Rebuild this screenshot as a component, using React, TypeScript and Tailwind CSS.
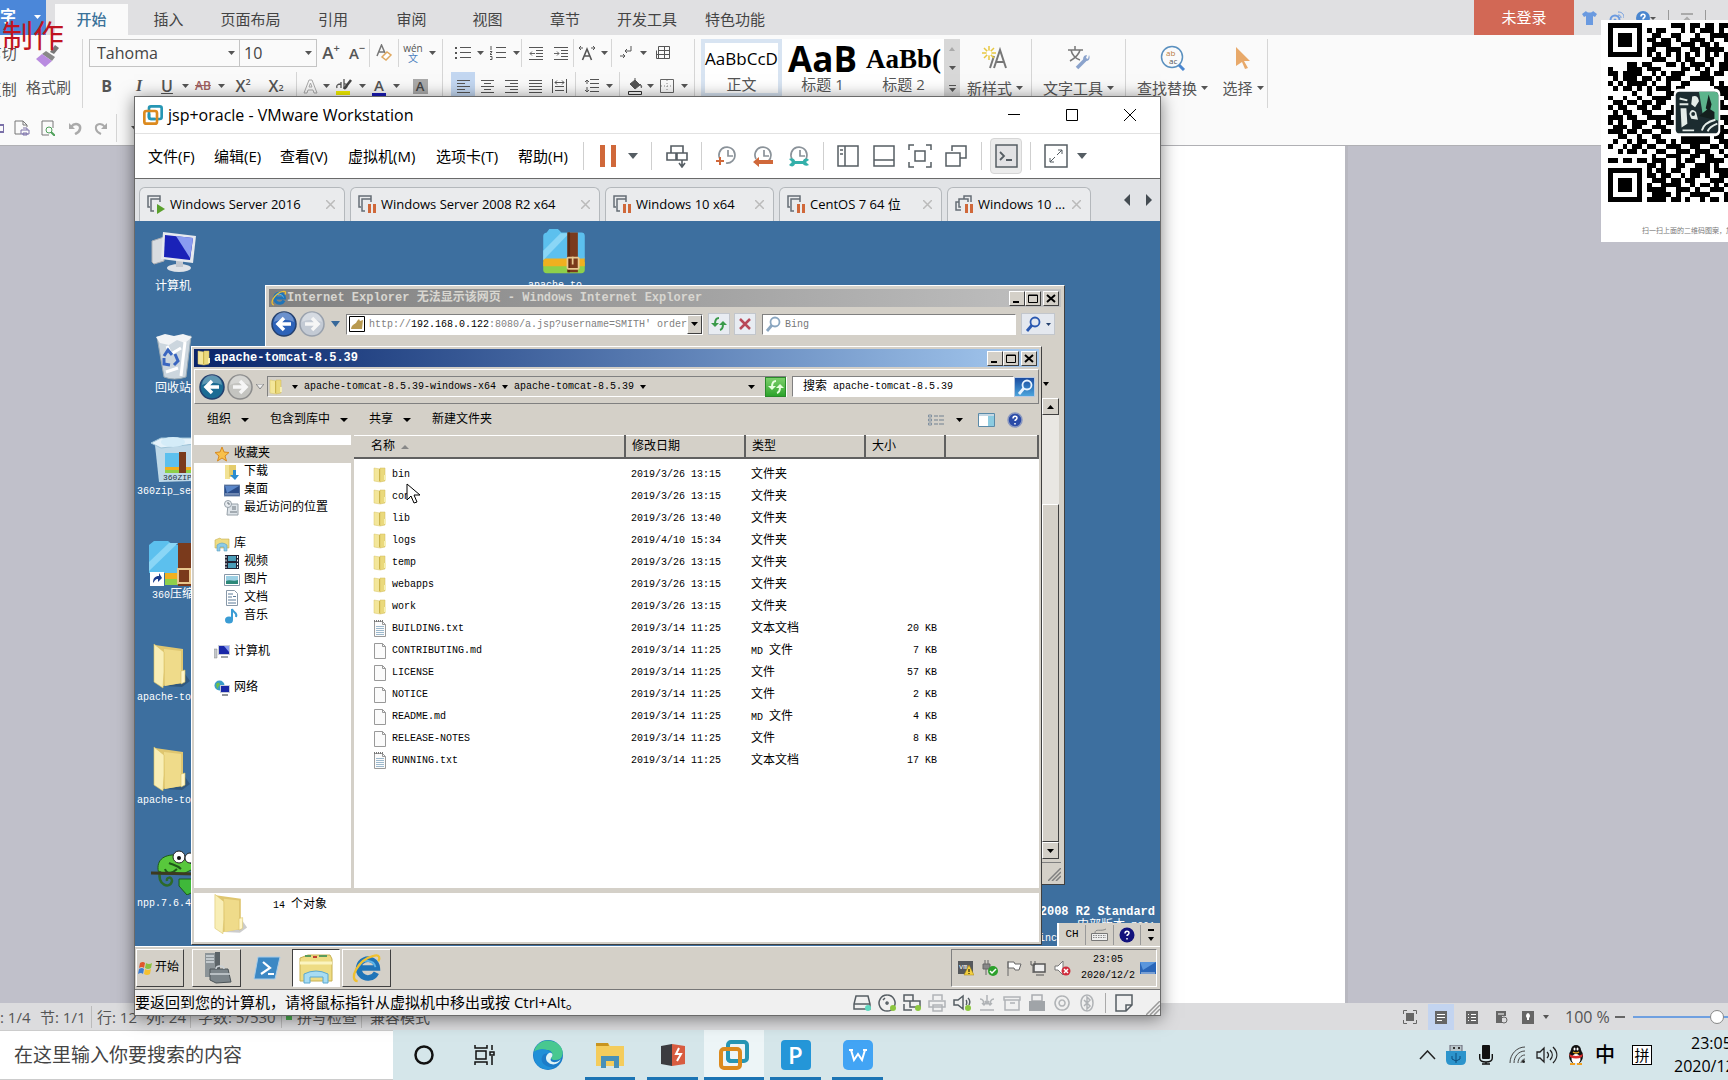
import { ReactNode } from "react";
import clsx from "clsx";

type Kids = { children?: ReactNode; className?: string };

const ui = "font-['Open_Sans','Noto_Sans_CJK_SC',sans-serif]";
const mono = "font-['Liberation_Mono','Noto_Sans_CJK_SC',monospace]";
const raised =
  "border border-t-white border-l-white border-r-[#404040] border-b-[#404040] bg-[#d4d0c8]";
const sunken =
  "border border-t-[#808080] border-l-[#808080] border-r-white border-b-white";

const Svg = ({
  w,
  h = w,
  box,
  children,
  className,
}: Kids & { w: number; h?: number; box?: string }) => (
  <svg
    width={w}
    height={h}
    viewBox={box ?? `0 0 ${w} ${h}`}
    fill="none"
    className={clsx("shrink-0", className)}
    aria-hidden="true"
  >
    {children}
  </svg>
);

const Caret = ({ className = "text-[#555]" }: { className?: string }) => (
  <Svg w={7} h={4} className={className}>
    <path d="M0 0h7L3.500 4z" fill="currentColor" />
  </Svg>
);

// Guest text is a bitmap-like face: narrow Latin next to 12px Chinese
const Guest = ({ text }: { text: string }) => (
  <>
    {text
      .split(/([\u4e00-\u9fff]+)/)
      .filter(Boolean)
      .map((part, i) => (
        <span key={i} className={/[\u4e00-\u9fff]/.test(part) ? "text-[12px]" : undefined}>
          {part}
        </span>
      ))}
  </>
);

const Tool = ({ children, className, label }: Kids & { label: string }) => (
  <button
    type="button"
    aria-label={label}
    className={clsx("flex h-6 shrink-0 items-center justify-center", className)}
  >
    {children}
  </button>
);

const Drop = ({ label }: { label: string }) => (
  <Tool label={label} className="w-[10px]">
    <Caret />
  </Tool>
);

const Sep = ({ className }: { className?: string }) => (
  <div className={clsx("h-7 w-px shrink-0 bg-[#d6d6d6]", className)} />
);

/* ---------- word processor ---------- */

const ribbonTabs = [
  { name: "插入", width: "w-[81px]" },
  { name: "页面布局", width: "w-[83px]" },
  { name: "引用", width: "w-[82px]" },
  { name: "审阅", width: "w-[75px]" },
  { name: "视图", width: "w-[77px]" },
  { name: "章节", width: "w-[78px]" },
  { name: "开发工具", width: "w-[86px]" },
  { name: "特色功能", width: "w-[90px]" },
];

const AppTabs = () => (
  <header className="flex h-[35px] shrink-0 bg-[#e0e0e2] text-[15px] text-[#444]">
    <button
      type="button"
      className="flex w-[46px] items-start justify-between bg-[#4b87d9] pr-[5px] pt-[5px] text-[16px] font-bold leading-[22px] text-white"
    >
      字
      <Caret className="mt-[10px] text-white" />
    </button>
    <nav className="flex items-end pl-[9px]">
      <button
        type="button"
        className="h-[31px] w-[73px] bg-[#fafafa] font-medium text-[#3a7199]"
      >
        开始
      </button>
      {ribbonTabs.map((tab) => (
        <button
          key={tab.name}
          type="button"
          className={clsx("h-[31px] whitespace-nowrap", tab.width)}
        >
          {tab.name}
        </button>
      ))}
    </nav>
    <div className="ml-auto flex h-full">
      <button type="button" className="w-[100px] bg-[#d26855] text-white">
        未登录
      </button>
      <div className="flex w-[154px] items-center gap-3 pl-2">
        <Svg w={15} h={14}>
          <path d="M4 0c1 2 6 2 7 0l4 3-2 3-2-1v9H4V5L2 6 0 3z" fill="#6a9ae0" />
        </Svg>
        <Svg w={15} h={14}>
          <circle cx="6" cy="9" r="4.500" stroke="#6a9ae0" strokeWidth="2" />
          <circle cx="6" cy="9" r="1.500" fill="#6a9ae0" />
          <path d="M9 4c2 0 3 1 3 3M9 1c4 0 6 2 6 6" stroke="#6a9ae0" />
        </Svg>
        <Svg w={20} h={14}>
          <circle cx="7" cy="7" r="7" fill="#4a86cf" />
          <path d="M5 5.500c0-3 4-3 4-.5 0 2-2 1.500-2 3.500M7 10v1" stroke="#fff" strokeWidth="1.600" />
          <path d="M14 6h6l-3 3z" fill="#555" />
        </Svg>
        <div className="h-4 w-px bg-[#999]" />
        <Svg w={12} h={10}>
          <path d="M0 1h12M3 8l3-3 3 3" stroke="#aaa" strokeWidth="2" />
        </Svg>
        <div className="h-4 w-px bg-[#999]" />
      </div>
    </div>
  </header>
);

const lineSets: Record<string, string> = {
  left: "M0 .5h13M0 3.500h8M0 6.500h13M0 9.500h8M0 12.500h13",
  center: "M0 .5h13M3 3.500h7M0 6.500h13M3 9.500h7M0 12.500h13",
  right: "M0 .5h13M5 3.500h8M0 6.500h13M5 9.500h8M0 12.500h13",
  full: "M0 .5h13M0 3.500h13M0 6.500h13M0 9.500h13M0 12.500h13",
};

const Lines = ({ kind }: { kind: string }) => (
  <Svg w={13}>
    <path d={lineSets[kind]} stroke="#555" />
  </Svg>
);

const Indent = ({ flip }: { flip?: boolean }) => (
  <Svg w={14} h={13}>
    <path d="M0 .5h14M7 3.500h7M7 6.500h7M7 9.500h7M0 12.500h14" stroke="#555" />
    <path
      d={flip ? "M0 6.500h5M3 4.500l2 2-2 2" : "M6 6.500H1M3 4.500l-2 2 2 2"}
      stroke="#666"
    />
  </Svg>
);

const FontGroup = () => (
  <div className="flex w-[354px] flex-col pl-[6px]">
    <div className="flex h-7 items-center">
      <select
        aria-label="字体"
        className="h-7 w-[151px] appearance-none border border-[#c4c4c4] bg-[#fafafa] pl-[7px] text-[16px] leading-6 text-[#444]"
      >
        <option>Tahoma</option>
      </select>
      <Caret className="-ml-[12px] mr-[5px] text-[#555]" />
      <select
        aria-label="字号"
        className="-ml-px h-7 w-[78px] appearance-none border border-[#c4c4c4] bg-[#fafafa] pl-1 text-[16px] leading-6 text-[#444]"
      >
        <option>10</option>
      </select>
      <Caret className="-ml-[12px] mr-[5px] text-[#555]" />
      <Tool label="增大字号" className="w-7 text-[17px] font-semibold text-[#555]">
        A<sup className="text-[11px]">+</sup>
      </Tool>
      <Tool label="减小字号" className="w-6 text-[15px] font-semibold text-[#555]">
        A<sup className="text-[11px]">−</sup>
      </Tool>
      <Sep />
      <Tool label="清除格式" className="w-7">
        <Svg w={16} h={18}>
          <path d="M1 12L5.500 1 9 9M3 8h5" stroke="#777" strokeWidth="1.500" />
          <path d="M6 13l5-5 4 3-5 5z" fill="#fff" stroke="#e0a860" strokeWidth="1.500" />
        </Svg>
      </Tool>
      <Sep />
      <Tool label="拼音指南" className="w-7 flex-col text-[10px] leading-[10px] text-[#555]">
        wén
        <span className="text-[10px] text-[#4a7fc0]">文</span>
      </Tool>
      <Drop label="拼音选项" />
    </div>
    <div className="mt-[5px] flex h-7 items-center text-[16px] font-semibold text-[#555]">
      <Tool label="加粗" className="w-[35px] font-bold">B</Tool>
      <Tool label="倾斜" className="w-[30px] font-['Liberation_Serif',serif] italic">I</Tool>
      <Tool label="下划线" className="w-[26px] underline">U</Tool>
      <Drop label="下划线选项" />
      <Tool label="删除线" className="w-[26px] text-[12px] text-[#a06060] line-through">AB</Tool>
      <Drop label="删除线选项" />
      <Tool label="上标" className="w-[34px]">X<sup className="text-[9px]">2</sup></Tool>
      <Tool label="下标" className="w-[32px]">X<sub className="text-[9px]">2</sub></Tool>
      <Sep className="ml-[4px] mr-[2px]" />
      <Tool label="文字效果" className="w-[22px]">
        <Svg w={15} h={15}>
          <path d="M1 14L6 1h3l5 13h-3l-1-3H5l-1 3zM6 8h3L7.500 4z" stroke="#aaa" />
        </Svg>
      </Tool>
      <Drop label="文字效果选项" />
      <Tool label="突出显示" className="w-[26px]">
        <Svg w={17} h={18}>
          <path d="M0 14h14v4H0z" fill="#f4f000" />
          <path d="M1 11c-1-3 1-4 4-4M5 5v6M8 2v9c4 1 4-5 0-4" stroke="#555" strokeWidth="1.300" />
          <path d="M8 12l7-9" stroke="#444" strokeWidth="2.500" />
        </Svg>
      </Tool>
      <Drop label="突出显示选项" />
      <Tool label="字体颜色" className="w-6">
        <span className="h-[19px] border-b-[3px] border-[#1a1ab8] px-[2px] text-[15px] leading-4">A</span>
      </Tool>
      <Drop label="字体颜色选项" />
      <Tool label="字符底纹" className="ml-[7px] w-6">
        <span className="h-[15px] w-[15px] bg-[#aaa] text-center text-[13px] leading-[15px] text-[#444]">A</span>
      </Tool>
    </div>
  </div>
);

const ParagraphGroup = () => (
  <div className="flex w-[251px] flex-col pl-2">
    <div className="flex h-7 items-center">
      <Tool label="项目符号" className="w-[24px]">
        <Svg w={16} h={14}>
          <path d="M5 1.500h11M5 6.500h11M5 11.500h11" stroke="#555" />
          <path d="M0 1h2v2H0zM0 6h2v2H0zM0 11h2v2H0z" fill="#555" />
        </Svg>
      </Tool>
      <Drop label="项目符号选项" />
      <Tool label="编号" className="w-[26px]">
        <Svg w={16} h={15}>
          <path d="M6 1.500h10M6 6.500h10M6 11.500h10M1 0v4M0 5.500h2l-2 3h2M0 10.500h2v3H0" stroke="#555" />
        </Svg>
      </Tool>
      <Drop label="编号选项" />
      <Sep />
      <Tool label="减少缩进" className="w-[28px]"><Indent /></Tool>
      <Tool label="增加缩进" className="w-[22px]"><Indent flip /></Tool>
      <Sep className="mx-px" />
      <Tool label="字符缩放" className="w-[24px]">
        <Svg w={18} h={16}>
          <path d="M4.500 15L9 4l4.500 11M6 11h6" stroke="#555" strokeWidth="1.600" />
          <path d="M5 3H1M3 1L1 3l2 2M13 3h4M15 1l2 2-2 2" stroke="#555" />
        </Svg>
      </Tool>
      <Drop label="字符缩放选项" />
      <Sep className="mx-[2px]" />
      <Tool label="换行标记" className="w-[24px]">
        <Svg w={14} h={14}>
          <path d="M12 0v5H6M8 3L6 5l2 2M1 10h5M4 8l2 2-2 2" stroke="#555" />
        </Svg>
      </Tool>
      <Drop label="换行标记选项" />
      <Tool label="制表位" className="w-[28px]">
        <Svg w={15} h={14}>
          <path d="M3.500.5h11v12h-13v-8M3.500.5v12M9.500.5v12M1.500 8.500h13M3.500 4.500h11" stroke="#555" />
        </Svg>
      </Tool>
    </div>
    <div className="mt-[5px] flex h-7 items-center">
      <Tool label="左对齐" className="h-7 w-6 bg-[#c3d7f1]"><Lines kind="left" /></Tool>
      <Tool label="居中" className="w-6"><Lines kind="center" /></Tool>
      <Tool label="右对齐" className="w-6"><Lines kind="right" /></Tool>
      <Tool label="两端对齐" className="w-6"><Lines kind="full" /></Tool>
      <Tool label="分散对齐" className="w-6">
        <Svg w={15} h={14}>
          <path d="M.5 0v14M14.500 0v14M3 3.500h9M3 7.500h9M3 11.500h9M5 1.500l-2 2 2 2M10 1.500l2 2-2 2" stroke="#555" />
        </Svg>
      </Tool>
      <Sep className="mx-1" />
      <Tool label="行距" className="w-6">
        <Svg w={14} h={14}>
          <path d="M5 .5h9M5 4.500h9M5 8.500h9M5 12.500h9M2 1v4M2 8v5M0 3l2-2 2 2M0 11l2 2 2-2" stroke="#555" />
        </Svg>
      </Tool>
      <Drop label="行距选项" />
      <Sep className="mx-[5px]" />
      <Tool label="底纹颜色" className="w-5">
        <Svg w={15} h={17}>
          <path d="M2 6l5-4 5 5-5 4zM7 0v3M12 6c2 2 2 3 1 4" fill="#555" stroke="#555" />
          <path d="M.5 13.500h13v3H.5z" stroke="#333" />
        </Svg>
      </Tool>
      <Drop label="底纹选项" />
      <Tool label="边框" className="w-6">
        <Svg w={14} h={14}>
          <path d="M.5.5h13v13H.5z" stroke="#666" />
          <path d="M7 1v12M1 7h12" stroke="#888" strokeDasharray="1 2" />
        </Svg>
      </Tool>
      <Drop label="边框选项" />
    </div>
  </div>
);

const styleCards = [
  {
    sample: "AaBbCcD",
    name: "正文",
    card: "border-4 border-[#d8e4f2]",
    face: "text-[17px]",
  },
  {
    sample: "AaB",
    name: "标题 1",
    card: "border-4 border-transparent",
    face: "text-[35px] font-bold",
  },
  {
    sample: "AaBb(",
    name: "标题 2",
    card: "border-4 border-transparent",
    face: "font-['Liberation_Serif',serif] text-[27px] font-bold",
  },
];

const StyleGallery = () => (
  <div className="flex h-[58px] w-[258px] bg-white">
    {styleCards.map((item) => (
      <button
        key={item.name}
        type="button"
        className={clsx(
          "flex w-[81px] shrink-0 flex-col items-center justify-between whitespace-nowrap",
          item.card
        )}
      >
        <span className={clsx("flex h-8 items-center leading-8 text-black", item.face)}>
          {item.sample}
        </span>
        <span className="text-[15px] leading-[18px] text-[#555]">{item.name}</span>
      </button>
    ))}
    <div className="flex w-4 shrink-0 flex-col items-center justify-between bg-[#d8d8d8] pb-1 pt-2">
      <Svg w={6} h={4}><path d="M0 4h6L3 0z" fill="#aaa" /></Svg>
      <Caret />
      <Svg w={7} h={8}><path d="M0 .5h7" stroke="#555" /><path d="M0 3h7L3.500 7z" fill="#555" /></Svg>
    </div>
  </div>
);

const BigTool = ({ label, icon, className }: { label: string; icon: ReactNode; className: string }) => (
  <button
    type="button"
    className={clsx("flex flex-col items-center pt-1 text-[15px] text-[#555]", className)}
  >
    <span className="flex h-[30px] items-center">{icon}</span>
    <span className="flex items-center gap-1 whitespace-nowrap pt-1 leading-[22px]">
      {label}
      <Caret />
    </span>
  </button>
);

const Ribbon = () => (
  <div className="flex h-[111px] shrink-0 flex-col overflow-hidden border-b border-[#b0b0b4] bg-[#fafafa]">
    <div className="flex pt-1">
      <div className="flex w-[82px] justify-between text-[15px] leading-[22px] text-[#555]">
        <div className="flex w-[17px] flex-col items-end gap-[14px] overflow-hidden pt-[3px]">
          <span className="whitespace-nowrap">剪切</span>
          <span className="whitespace-nowrap">复制</span>
        </div>
        <button type="button" className="flex w-[66px] flex-col items-center pr-[2px] pt-[5px]">
          <Svg w={24} h={24}>
            <path d="M14 8l5-7 4 3-5 6z" fill="#777" />
            <path d="M10 7l9 6-3 4-10-7z" fill="#888" />
            <path d="M6 10l10 7-7 6-9-8z" fill="#b98be0" />
          </Svg>
          <span className="pt-2">格式刷</span>
        </button>
      </div>
      <Sep className="h-[69px]" />
      <FontGroup />
      <Sep className="ml-[5px] h-[69px]" />
      <ParagraphGroup />
      <Sep className="mr-[6px] h-[69px]" />
      <StyleGallery />
      <BigTool
        label="新样式"
        className="w-[72px]"
        icon={
          <Svg w={26} h={24}>
            <path d="M12 22L18 4l6 18M14 16h8M8 22l4-12" stroke="#777" strokeWidth="2" />
            <path d="M7 0v14M0 7h14M2 2l10 10M12 2L2 12" stroke="#e8c840" strokeWidth="1.500" />
            <circle cx="7" cy="7" r="2.500" fill="#fff" />
          </Svg>
        }
      />
      <Sep className="h-[69px]" />
      <BigTool
        label="文字工具"
        className="w-[93px]"
        icon={
          <Svg w={24} h={24}>
            <path d="M1 4h15M8 0v4M3 15C8 12 12 9 13 4M4 4c1 5 5 9 9 10" stroke="#777" strokeWidth="1.500" />
            <path d="M10 22l8-8" stroke="#8ba3cc" strokeWidth="3.500" />
            <path d="M22 9c2 4-1 7-5 6-2-3 0-6 3-6l-1 3 2 1z" fill="#8ba3cc" />
          </Svg>
        }
      />
      <Sep className="h-[69px]" />
      <BigTool
        label="查找替换"
        className="w-[93px]"
        icon={
          <Svg w={26} h={26}>
            <circle cx="12" cy="12" r="10.500" stroke="#5a90bf" strokeWidth="1.500" />
            <path d="M19 20l5 5" stroke="#4a86cf" strokeWidth="3" />
            <text x="6" y="11" fontSize="8" fill="#b97a40">ab</text>
            <text x="9" y="19" fontSize="8" fill="#555">ac</text>
          </Svg>
        }
      />
      <BigTool
        label="选择"
        className="w-[48px]"
        icon={
          <Svg w={16} h={24}>
            <path d="M1 1l14 14h-6l4 7-3 1-3-7-6 4z" fill="#e8a96a" />
          </Svg>
        }
      />
      <Sep className="h-[69px]" />
    </div>
    <div className="flex h-9 items-center pt-1 text-[#888]">
      <Svg w={4} h={14}><path d="M0 4h4v7H0" stroke="#7a70a8" strokeWidth="2" /></Svg>
      <Tool label="打印" className="ml-2 w-[20px]">
        <Svg w={16} h={16}>
          <path d="M13 7V5L9 1H1v13h6M9 1v4h4" stroke="#777" />
          <path d="M7 10h8v4H7zM9 8h4v2M9 13h4v2H9z" stroke="#7a70a8" />
        </Svg>
      </Tool>
      <Tool label="打印预览" className="ml-[6px] w-[20px]">
        <Svg w={14} h={16}>
          <path d="M12 8V1H1v14h7" stroke="#777" />
          <circle cx="8" cy="10" r="3" stroke="#4fa05a" />
          <path d="M10 12l4 4" stroke="#4fa05a" strokeWidth="2" />
        </Svg>
      </Tool>
      <Tool label="撤销" className="ml-[7px] w-[20px]">
        <Svg w={14} h={14}>
          <path d="M3 6c4-5 10-3 9 2-.5 3-3 4-5 5" stroke="#aaa" strokeWidth="2.500" />
          <path d="M1 2v6h6z" fill="#aaa" />
        </Svg>
      </Tool>
      <Tool label="恢复" className="ml-[6px] w-[20px]">
        <Svg w={14} h={14}>
          <path d="M11 6C7 1 1 3 2 8c.5 3 3 4 5 5" stroke="#aaa" strokeWidth="2" />
          <path d="M13 2v6H7z" fill="#aaa" />
        </Svg>
      </Tool>
      <Sep className="ml-[5px]" />
      <Tool label="更多命令" className="ml-3 w-[10px]"><Caret /></Tool>
    </div>
  </div>
);

const StatusBar = () => (
  <footer className="flex h-[27px] shrink-0 items-center overflow-hidden whitespace-nowrap bg-[#dcdcde] pt-px text-[15px] text-[#555]">
    <span className="w-[40px]">: 1/4</span>
    <span className="w-[51px]">节: 1/1</span>
    <span className="w-[49px] border-l border-[#bbb] pl-[5px]">行: 12</span>
    <span className="w-[50px] pl-[6px]">列: 24</span>
    <span className="w-[91px] border-l border-[#bbb] pl-[7px]">字数: 5/530</span>
    <span className="flex w-[80px] items-center gap-[5px] border-l border-[#bbb] pl-1">
      <i className="h-[6px] w-[6px] bg-[#4caf50]" />
      拼写检查
    </span>
    <span className="border-l border-[#bbb] pl-[8px]">兼容模式</span>
    <div className="ml-auto flex w-[328px] shrink-0 items-center">
      <Svg w={14} h={14} className="ml-[3px]">
        <path d="M3 3h8v8H3z" fill="#666" />
        <path d="M.5 4V.5H4M10 .5h3.500V4M.5 10v3.500H4M10 13.500h3.500V10" stroke="#666" />
      </Svg>
      <button type="button" aria-label="页面视图" className="ml-[11px] flex h-[27px] w-[26px] items-center justify-center bg-[#c3d4f0]">
        <Svg w={12} h={13}>
          <path d="M0 0h12v13H0z" fill="#666" />
          <path d="M2 3.500h8M2 6.500h8M2 9.500h5" stroke="#fff" />
        </Svg>
      </button>
      <Svg w={12} h={13} className="ml-3">
        <path d="M0 0h12v13H0z" fill="#666" />
        <path d="M2 3.500h1M5 3.500h5M2 6.500h1M5 6.500h5M2 9.500h1M5 9.500h5" stroke="#fff" />
      </Svg>
      <Svg w={12} h={13} className="ml-[18px]">
        <path d="M0 0h10v5H6v7H0z" fill="#666" />
        <circle cx="8" cy="9" r="3" stroke="#666" />
        <path d="M2 3h6" stroke="#fff" />
      </Svg>
      <Svg w={12} h={13} className="ml-[14px]">
        <path d="M0 0h12v13H0z" fill="#666" />
        <path d="M6 2a3 3 0 0 1 1 5v2H5V7a3 3 0 0 1 1-5zM5 11h2" fill="#fff" />
      </Svg>
      <Svg w={6} h={4} className="ml-[9px]"><path d="M0 0h6L3 4z" fill="#555" /></Svg>
      <span className="ml-[16px] w-[50px] text-[16px]">100 %</span>
      <i className="h-[2px] w-[10px] shrink-0 bg-[#666]" />
      <div className="ml-2 flex w-[95px] overflow-hidden">
        <input
          type="range"
          aria-label="显示比例"
          defaultValue={50}
          className="h-4 w-[168px] shrink-0 appearance-none bg-transparent [&::-webkit-slider-runnable-track]:h-[2px] [&::-webkit-slider-runnable-track]:bg-[#6fa0e0] [&::-webkit-slider-thumb]:-mt-[6px] [&::-webkit-slider-thumb]:h-[14px] [&::-webkit-slider-thumb]:w-[14px] [&::-webkit-slider-thumb]:appearance-none [&::-webkit-slider-thumb]:rounded-full [&::-webkit-slider-thumb]:border [&::-webkit-slider-thumb]:border-[#888] [&::-webkit-slider-thumb]:bg-white"
        />
      </div>
    </div>
  </footer>
);

/* ---------- shared logos ---------- */

const VmwareLogo = ({ size }: { size: number }) => (
  <Svg w={size} box="0 0 30 30">
    <rect x="9" y="2" width="19" height="19" rx="3" stroke="#2696b4" strokeWidth="4" />
    <rect x="2" y="9" width="19" height="19" rx="3" stroke="#dc8a1e" strokeWidth="4" />
    <path d="M9 13v5.500a3 3 0 0 0 3 2.500h6" stroke="#2696b4" strokeWidth="4" />
  </Svg>
);

const IeLogo = ({ size }: { size: number }) => (
  <Svg w={size} box="0 0 32 32">
    <path d="M26 21a10 10 0 1 1 1-5H9" stroke="#1f74b8" strokeWidth="6" />
    <path d="M25 15a9 8 0 0 0-17-2" stroke="#5cb4e8" strokeWidth="2" />
    <path d="M6 30C-4 29 6 7 23 3c7-2 7 3 5 6" stroke="#f0c030" strokeWidth="2.500" />
  </Svg>
);

// Half-open folder, the large one
const BigFolder = ({ w = 38, h = 46 }: { w?: number; h?: number }) => (
  <Svg w={w} h={h} box="0 0 38 46">
    <path d="M30 28l7 10-8 6-18-1z" fill="#000" opacity=".2" />
    <path d="M2 2l28 4v34l-20 3z" fill="#dfc670" />
    <path d="M11 6l17 2v32l-16 3z" fill="#efdb8a" />
    <path d="M1 1l10 8v20l-1 16L1 39z" fill="#f8eeb6" stroke="#d8bf60" strokeWidth=".6" />
    <path d="M28 28l4-1v12l-4 2z" fill="#fff6c8" stroke="#d8bf60" strokeWidth=".6" />
  </Svg>
);

const SmallFolder = () => (
  <Svg w={16}>
    <path d="M2 1l6 1v13l-6-1z" fill="#f3e69a" stroke="#d9c566" strokeWidth=".5" />
    <path d="M7 2h3v12H7z" fill="#c9b348" />
    <path d="M8 1h5v13l-5 1z" fill="#ead97c" stroke="#d0bb58" strokeWidth=".5" />
    <path d="M12 8h2v5h-2z" fill="#f6efb4" />
  </Svg>
);

const ZipFolder = () => (
  <Svg w={48} h={45} box="0 0 48 52">
    <path d="M0 38h48v9q0 4-4 4H4q-4 0-4-4z" fill="#8ed04a" />
    <path d="M0 33h48v10H0z" fill="#f0b020" />
    <path d="M0 8q0-3 4-4l3-4h10l4 4h23q4 0 4 4v26H0z" fill="#5cc0ee" />
    <path d="M0 25L20 5h10L0 36z" fill="#8ad6f6" />
    <path d="M28 4h12v46H28z" fill="#7a3a1c" />
    <path d="M28 4h3v46h-3z" fill="#5c2a12" />
    <rect x="28" y="33" width="13" height="13" rx="1" stroke="#e8c890" strokeWidth="2" />
    <path d="M34 32v9" stroke="#e8c890" strokeWidth="2" />
  </Svg>
);

const Computer = () => (
  <Svg w={46} h={41}>
    <path d="M1 9l12-4v24l-10 3-2-2z" fill="#d9dce0" stroke="#a9adb3" />
    <ellipse cx="28" cy="36" rx="12" ry="4" fill="#dfe3e8" />
    <path d="M25 28h7v7h-7z" fill="#c2c7cf" />
    <path d="M12 0l33 4-3 27-32-4z" fill="#e6e9ee" />
    <path d="M14 3l28 3-3 22-26-3z" fill="#1a22b8" />
    <path d="M25 4l17 2-3 20z" fill="#8a9cf0" />
  </Svg>
);

/* ---------- VMware chrome ---------- */

const menus = [
  { name: "文件(F)", width: "w-[66px]" },
  { name: "编辑(E)", width: "w-[66px]" },
  { name: "查看(V)", width: "w-[68px]" },
  { name: "虚拟机(M)", width: "w-[88px]" },
  { name: "选项卡(T)", width: "w-[82px]" },
  { name: "帮助(H)", width: "w-[65px]" },
];

const VmSep = () => <div className="h-7 w-px shrink-0 bg-[#cfcfcf]" />;

const ClockFace = () => (
  <path d="M5 15a8 8 0 1 1 6 4M13 6v6h5" stroke="#8a9299" strokeWidth="1.700" />
);

const VmToolbar = () => (
  <div className="flex h-[46px] items-center border-b border-t border-b-[#6a6a6a] border-t-[#e2e2e2] bg-white pl-[13px]">
    <div className="flex text-[15px] text-black">
      {menus.map((menu) => (
        <button
          key={menu.name}
          type="button"
          className={clsx("whitespace-nowrap text-left", menu.width)}
        >
          {menu.name}
        </button>
      ))}
    </div>
    <VmSep />
    <Tool label="暂停" className="w-[44px] pl-1">
      <Svg w={18} h={22}>
        <path d="M1 0h5v22H1zM12 0h5v22h-5z" fill="#d0683a" />
      </Svg>
    </Tool>
    <Tool label="电源选项" className="w-[23px] justify-start">
      <Svg w={10} h={6}><path d="M0 0h10L5 6z" fill="#555d63" /></Svg>
    </Tool>
    <VmSep />
    <Tool label="发送按键" className="w-[49px]">
      <Svg w={24} h={24}>
        <path d="M6 2h12v7H6zM2 9h9v7H2zM12 9h10v7H12zM17 16v6M14 19l3 4 3-4" stroke="#555d63" strokeWidth="1.600" />
      </Svg>
    </Tool>
    <VmSep />
    <Tool label="拍摄快照" className="w-[49px]">
      <Svg w={24} h={24}>
        <ClockFace />
        <path d="M1 17h8M5 13v8" stroke="#d0683a" strokeWidth="2" />
      </Svg>
    </Tool>
    <Tool label="恢复快照" className="w-6">
      <Svg w={24} h={24}>
        <ClockFace />
        <path d="M2 18l6-5v3h14v4H8v3z" fill="#d0683a" />
      </Svg>
    </Tool>
    <Tool label="管理快照" className="w-[48px]">
      <Svg w={24} h={24}>
        <ClockFace />
        <path d="M2 15c3-2 6 0 6 2h8c1-3 4-3 6-1l-3 2 3 3c-2 1-5 1-6-1H8c-1 3-4 3-6 1l3-3z" fill="#34b0aa" />
      </Svg>
    </Tool>
    <VmSep />
    <Tool label="显示库" className="w-[48px]">
      <Svg w={22} h={22}>
        <path d="M1 1h20v20H1zM8 1v20M3 5h3M3 9h3" stroke="#555d63" strokeWidth="1.500" />
      </Svg>
    </Tool>
    <Tool label="缩略图栏" className="w-6">
      <Svg w={22} h={22}>
        <path d="M1 1h20v20H1zM1 15h20" stroke="#555d63" strokeWidth="1.500" />
      </Svg>
    </Tool>
    <Tool label="全屏" className="w-[48px]">
      <Svg w={24} h={24}>
        <path d="M7 7h10v10H7zM1 6V1h5M18 1h5v5M1 18v5h5M18 23h5v-5" stroke="#555d63" strokeWidth="1.500" />
      </Svg>
    </Tool>
    <Tool label="Unity" className="mr-[13px] w-6">
      <Svg w={22} h={22}>
        <path d="M7 6V1h14v12h-6M1 8h14v13H1z" stroke="#555d63" strokeWidth="1.500" />
      </Svg>
    </Tool>
    <VmSep />
    <Tool label="控制台视图" className="mx-2 h-9 w-8 rounded border border-[#d6d6d6] bg-[#ececec]">
      <Svg w={23} h={24}>
        <path d="M1 1h21v22H1z" fill="#e2e2e4" stroke="#555d63" strokeWidth="1.500" />
        <path d="M5 8l4 4-4 4M11 16h6" stroke="#555d63" strokeWidth="1.800" />
      </Svg>
    </Tool>
    <VmSep />
    <Tool label="自由拉伸" className="w-[46px] pl-1">
      <Svg w={24} h={24}>
        <path d="M1 1h22v22H1z" stroke="#555d63" strokeWidth="1.500" />
        <path d="M14 6h4v4M18 6l-5 5M10 18H6v-4M6 18l5-5" stroke="#555d63" />
      </Svg>
    </Tool>
    <Tool label="拉伸选项" className="w-[10px]">
      <Svg w={10} h={6}><path d="M0 0h10L5 6z" fill="#555d63" /></Svg>
    </Tool>
  </div>
);

const machines = [
  { name: "Windows Server 2016", width: "w-[206px]", state: "play" },
  { name: "Windows Server 2008 R2 x64", width: "w-[250px]", state: "pause" },
  { name: "Windows 10 x64", width: "w-[169px]", state: "pause" },
  { name: "CentOS 7 64 位", width: "w-[163px]", state: "pause" },
  { name: "Windows 10 ...", width: "w-[144px]", state: "group" },
];

const MachineIcon = ({ state }: { state: string }) => (
  <Svg w={18} h={19}>
    <path
      d={state === "group" ? "M6 12H4V4h9v3M9 4V1h7v6M4 7H1v8h5" : "M3 12H1V1h12v3M13 7V4H4v12h3"}
      stroke="#666e75"
      strokeWidth="1.500"
    />
    {state === "play" ? (
      <path d="M10 9l8 5-8 5z" fill="#5aa02c" />
    ) : (
      <path d="M10 9h3v9h-3zM15 9h3v9h-3z" fill="#d0683a" />
    )}
  </Svg>
);

const MachineTabs = () => (
  <div className="flex h-[42px] items-end gap-[5px] bg-[#e1e3e6] pl-1">
    {machines.map((machine) => (
      <button
        key={machine.name}
        type="button"
        className={clsx(
          "flex h-[34px] shrink-0 items-center gap-[5px] whitespace-nowrap rounded-t-md border border-b-0 border-[#b4b8bc] bg-[#eaebed] pl-[7px] pr-[9px] text-[13px] text-black",
          machine.width
        )}
      >
        <MachineIcon state={machine.state} />
        {machine.name}
        <Svg w={9} h={9} className="ml-auto">
          <path d="M0 0l9 9M9 0L0 9" stroke="#bbb" strokeWidth="1.500" />
        </Svg>
      </button>
    ))}
    <div className="flex h-[42px] items-center gap-4 pl-[28px]">
      <Svg w={6} h={12}><path d="M6 0v12L0 6z" fill="#444c52" /></Svg>
      <Svg w={6} h={12}><path d="M0 0v12l6-6z" fill="#444c52" /></Svg>
    </div>
  </div>
);

const Device = ({ d, dot, faint }: { d: string; dot?: string; faint?: boolean }) => (
  <Svg w={20} h={20}>
    <path d={d} stroke={faint ? "#b0b3b6" : "#555d63"} strokeWidth="1.500" />
    {dot && <circle cx="16" cy="15" r="3" fill={dot} />}
  </Svg>
);

const VmStatus = () => (
  <div className="flex h-[26px] items-center border-t border-[#777] bg-[#f0f0f0] text-[15px] text-black">
    <span className="whitespace-nowrap">
      要返回到您的计算机，请将鼠标指针从虚拟机中移出或按 Ctrl+Alt。
    </span>
    <div className="ml-auto flex items-center gap-[5px] pr-[12px]">
      <Device d="M4 3h12l2 8v5H2v-5zM2 11h16" dot="#5fd8c0" />
      <Device d="M10 2a8 8 0 1 0 .1 0M10 9a1 1 0 1 0 .1 0M6 7l2-2" dot="#8cc63f" />
      <Device d="M2 2h9v6H2zM8 8h10v6H8zM2 11v6h8" dot="#8cc63f" />
      <Device d="M6 7V2h9v5M2 8h16v6H2zM6 12h9v6H6z" faint />
      <Device d="M2 7h4l5-4v13l-5-4H2zM14 7c1 1 1 4 0 5M16 5c2 2 2 5 1 7" dot="#8cc63f" />
      <Device d="M3 17h14M10 2v9M8 8l2 3 2-3M3 6c3 0 4 2 4 6M5 10l2 2 2-2M17 6c-3 0-4 2-4 6M11 10l2 2 2-2" faint />
      <Device d="M2 4h16v3H2zM3 7v10h14V7M8 10h5" faint />
      <Svg w={20} h={20}>
        <path d="M5 2h10v6H5z" stroke="#a9acb0" strokeWidth="1.500" />
        <path d="M2 8h16v10H2z" fill="#a0a4a8" />
      </Svg>
      <Device d="M10 3a7 7 0 1 0 .1 0M10 7a3 3 0 1 0 .1 0" faint />
      <Device d="M10 2c-8 0-8 16 0 16s8-16 0-16M7 7l6 6-3 3V4l3 3-6 6" faint />
      <div className="mx-[3px] h-5 w-px bg-[#aaa]" />
      <Device d="M2 2h16v10l-6 6H2zM18 12h-6v6" />
    </div>
    <Svg w={14} h={14} className="self-end">
      <path d="M0 14L14 0M4 14L14 4M8 14l6-6" stroke="#999" strokeWidth="1.500" />
    </Svg>
  </div>
);

/* ---------- guest desktop ---------- */

const Chameleon = () => (
  <Svg w={46} h={46}>
    <path d="M8 25C4 12 12 5 26 6l12 7 6 6-12 6z" fill="#58c83c" stroke="#1e5a18" />
    <path d="M14 20c2 6 8 4 12 0M18 14c4 2 8 2 12 6" stroke="#1e5a18" strokeWidth="2" />
    <path d="M9 22c-3 14 10 19 12 10 0-5-6-4-5 0" stroke="#2c6a28" strokeWidth="2.500" />
    <path d="M0 24l46 1" stroke="#3c3a20" strokeWidth="3" />
    <path d="M28 30h18v16l-6-2-4 2-8-9z" fill="#3fb83a" stroke="#1e5a18" />
    <circle cx="28" cy="8" r="6" fill="#fff" stroke="#222" />
    <circle cx="28" cy="9" r="2" fill="#111" />
    <circle cx="39" cy="9" r="5" fill="#fff" stroke="#222" />
  </Svg>
);

const RecycleBin = () => (
  <Svg w={38} h={46}>
    <path d="M2 3l34-1-5 41q-12 4-22 0z" fill="#ccd6de" stroke="#9aaab4" />
    <path d="M1 3l9-3 9 2 9-2 9 3-7 6-8-3-8 5-9-2z" fill="#f2f4f6" />
    <path d="M30 8l-4 34M12 12l4 8 10-6M11 38l12-4" stroke="#fff" strokeWidth="3" />
    <path d="M9 22l4-6 4 5M20 20l3 7-4 4M15 31l-6-1v-6" stroke="#3a66c0" strokeWidth="3" />
  </Svg>
);

const ZipBox = () => (
  <Svg w={44} h={46}>
    <path d="M4 8h38v36l-34 1z" fill="#bfd9e8" />
    <path d="M0 6l10-5h30l4 6-34 4z" fill="#e4f2fa" stroke="#9fc4d8" />
    <ellipse cx="22" cy="5" rx="12" ry="5" fill="#d4ecf8" />
    <path d="M14 16h14v14H14z" fill="#5cc0ee" />
    <path d="M14 30h26v3H14z" fill="#f0b020" />
    <path d="M14 33h26v3H14z" fill="#8ed04a" />
    <path d="M28 15h7v21h-7z" fill="#7a3a1c" />
    <text x="12" y="43" fontSize="8" fill="#234">360ZIP</text>
  </Svg>
);

const ShortcutZip = () => (
  <Svg w={48} h={46}>
    <path d="M0 5l5-4h14l5 4h24v28H0z" fill="#5cc0ee" />
    <path d="M0 22L20 3h9L0 31z" fill="#8ad6f6" />
    <path d="M16 33h32v6H16z" fill="#f0b020" />
    <path d="M16 39h32v6H16z" fill="#8ed04a" />
    <path d="M29 3h14v43H29z" fill="#7a3a1c" />
    <rect x="29" y="29" width="12" height="14" stroke="#e8c890" strokeWidth="2" />
    <path d="M1 32h14v14H1z" fill="#fff" />
    <path d="M4 43c0-5 2-7 6-7v-3l3 5-4 4v-3c-3 0-3 2-5 4z" fill="#1a3c8c" />
  </Svg>
);

const desktopIcons = [
  { label: "计算机", icon: <Computer />, inset: "pl-4", top: "top-[11px]" },
  { label: "回收站", icon: <RecycleBin />, inset: "pl-5", top: "top-[113px]" },
  { label: "360zip_setup", icon: <ZipBox />, inset: "pl-4", top: "top-[216px]" },
  { label: "360压缩", icon: <ShortcutZip />, inset: "pl-[14px]", top: "top-[319px]" },
  { label: "apache-to...", icon: <BigFolder />, inset: "pl-[18px]", top: "top-[422px]" },
  { label: "apache-to...", icon: <BigFolder />, inset: "pl-[18px]", top: "top-[525px]" },
  { label: "npp.7.6.4...", icon: <Chameleon />, inset: "pl-4", top: "top-[628px]" },
];

const WindowButtons = () => (
  <div className="flex">
    {["最小化", "最大化", "关闭"].map((label, i) => (
      <button
        key={label}
        type="button"
        aria-label={label}
        className={clsx("flex h-[15px] w-4 items-center justify-center", raised, i === 2 && "ml-[2px]")}
      >
        <Svg w={10} h={9}>
          <path
            d={["M1 8h6", "M.5 1h9v7.500h-9zM.5 1.500h9", "M1 1l8 7M9 1L1 8"][i]}
            stroke="#000"
            strokeWidth={i === 1 ? 1 : 2}
          />
        </Svg>
      </button>
    ))}
  </div>
);

const Round = ({ fill, ring, back }: { fill: string; ring: string; back?: boolean }) => (
  <Svg w={26}>
    <circle cx="13" cy="13" r="12" fill={fill} stroke={ring} strokeWidth="1.500" />
    <path d="M3 11a10 10 0 0 1 20 0c-6-3-14-3-20 0z" fill="#fff" opacity=".3" />
    <path
      d={back ? "M20 13H8M13 7l-6 6 6 6" : "M6 13h12M13 7l6 6-6 6"}
      stroke={back ? "#fff" : "#f6f6f6"}
      strokeWidth="3.500"
    />
  </Svg>
);

const Loupe = ({ color }: { color: string }) => (
  <Svg w={16} h={16}>
    <circle cx="10" cy="6" r="4.500" stroke={color} strokeWidth="1.800" />
    <path d="M7 9l-5 6" stroke={color} strokeWidth="2.800" />
  </Svg>
);

const SwapArrows = ({ color }: { color: string }) => (
  <Svg w={16} h={16}>
    <path d="M8 2q-4 0-4 6M9 14q3-1 3-6" stroke={color} strokeWidth="2" />
    <path d="M0 7h8l-4 4zM8 9h8l-4-4z" fill={color} />
  </Svg>
);

const IeWindow = () => (
  <div
    className={clsx(
      "absolute left-[130px] top-[64px] flex h-[600px] w-[800px] flex-col p-[3px] text-[10px]",
      raised
    )}
  >
    <div className="flex h-[18px] shrink-0 items-center bg-linear-to-r from-[#808080] to-[#c0c0c0] px-[2px] text-[12px] font-bold text-[#d8d6d0]">
      <IeLogo size={16} />
      <span className="whitespace-pre">
        <Guest text="Internet Explorer 无法显示该网页 - Windows Internet Explorer" />
      </span>
      <div className="ml-auto">
        <WindowButtons />
      </div>
    </div>
    <div className="flex h-[34px] shrink-0 items-center pl-[2px]">
      <Round fill="#2c62b8" ring="#24406e" back />
      <span className="w-[2px]" />
      <Round fill="#c3cad4" ring="#98a0ac" />
      <Svg w={9} h={6} className="mx-[6px]"><path d="M0 0h9L4.500 6z" fill="#37689a" /></Svg>
      <div className={clsx("flex h-[21px] w-[357px] items-center bg-white pl-[2px]", sunken)}>
        <Svg w={16} h={16}>
          <path d="M.5.5h15v15H.5z" fill="#fff" stroke="#000" />
          <path d="M2 13c1-6 5-4 6-8l2-2 1 2 3-1-1 9z" fill="#b99a50" />
        </Svg>
        <div className="flex-1 overflow-hidden whitespace-pre pl-1 text-[#808080]">
          http://<span className="text-black">192.168.0.122</span>:8080/a.jsp?username=SMITH' order
        </div>
        <button type="button" aria-label="历史" className={clsx("flex h-[19px] w-[15px] items-center justify-center", raised)}>
          <Caret className="text-black" />
        </button>
      </div>
      <button type="button" aria-label="刷新" className="ml-[5px] flex h-[22px] w-[22px] items-center justify-center border border-[#c2c6cc] bg-[#e8ecf2]">
        <SwapArrows color="#3a9a4a" />
      </button>
      <button type="button" aria-label="停止" className="ml-1 flex h-[22px] w-[22px] items-center justify-center border border-[#c2c6cc] bg-[#e8ecf2]">
        <Svg w={12}><path d="M1 1l10 10M11 1L1 11" stroke="#b84858" strokeWidth="2.500" /></Svg>
      </button>
      <label className={clsx("ml-[6px] flex h-[21px] w-[254px] items-center gap-1 bg-white pl-[2px]", sunken)}>
        <Loupe color="#8aa6c0" />
        <input aria-label="Bing" placeholder="Bing" className="w-[200px] bg-transparent outline-none placeholder:text-[#777]" />
      </label>
      <button type="button" aria-label="搜索" className="ml-[5px] flex h-[22px] w-[34px] items-center justify-around border border-[#c2c6cc] bg-[#e4e8ef]">
        <Loupe color="#2a58b0" />
        <Svg w={5} h={3}><path d="M0 0h5L2.500 3z" fill="#24406e" /></Svg>
      </button>
    </div>
    <div className="flex flex-1 flex-col items-end">
      <Svg w={6} h={4} className="mb-3 mr-3 mt-[41px]"><path d="M0 0h6L3 4z" fill="#000" /></Svg>
      <div className="mr-[2px] flex w-[17px] flex-1 flex-col bg-[#e9e7e3]">
        <button type="button" aria-label="向上" className={clsx("flex h-[17px] items-center justify-center", raised)}>
          <Svg w={7} h={4}><path d="M0 4h7L3.500 0z" fill="#000" /></Svg>
        </button>
        <div className={clsx("mt-[89px] flex-1", raised)} />
        <button type="button" aria-label="向下" className={clsx("flex h-[17px] items-center justify-center", raised)}>
          <Svg w={7} h={4}><path d="M0 0h7L3.500 4z" fill="#000" /></Svg>
        </button>
      </div>
      <div className="mt-[3px] flex h-[19px] w-full items-end justify-end border-t border-[#808080]">
        <Svg w={13} h={13}><path d="M0 13L13 0M4 13l9-9M8 13l5-5" stroke="#808080" strokeWidth="1.500" /></Svg>
      </div>
    </div>
  </div>
);

const places = [
  { name: "收藏夹", icon: "star" },
  { name: "下载", icon: "download", child: true },
  { name: "桌面", icon: "desktop", child: true },
  { name: "最近访问的位置", icon: "recent", child: true },
  null,
  { name: "库", icon: "library" },
  { name: "视频", icon: "video", child: true },
  { name: "图片", icon: "picture", child: true },
  { name: "文档", icon: "document", child: true },
  { name: "音乐", icon: "music", child: true },
  null,
  { name: "计算机", icon: "computer" },
  null,
  { name: "网络", icon: "network" },
];

const placeIcons: Record<string, ReactNode> = {
  star: <path d="M8 1l2 5 5 .5-4 3.500 1.500 5L8 12l-4.500 3L5 10 1 6.500 6 6z" fill="#f8c04a" stroke="#d88a20" />,
  download: (
    <>
      <path d="M1 1h5v14H1z" fill="#f2e294" />
      <path d="M5 1h7v12H5z" fill="#e4cc6c" />
      <path d="M9 6h3v5h3l-4 5-5-5h3z" fill="#2c8cd0" />
    </>
  ),
  desktop: (
    <>
      <path d="M0 3h16v11H0z" fill="#2a4c88" stroke="#7a90b0" />
      <path d="M1 4h14L3 11z" fill="#5a86c8" />
      <path d="M1 12h14" stroke="#b4c4dc" />
    </>
  ),
  recent: (
    <>
      <path d="M4 4h10v11H3z" fill="#dde3e8" stroke="#96a0a8" />
      <circle cx="4" cy="4" r="3.500" fill="#e8ecf0" stroke="#96a0a8" />
      <path d="M4 2v2h2M8 7h4M8 9h4M6 12h7" stroke="#6a747c" />
    </>
  ),
  library: (
    <>
      <path d="M1 4l5-2 1 1h8v9H1z" fill="#eedc84" stroke="#c8b050" strokeWidth=".6" />
      <path d="M3 15V9q5-4 10 0v6h-3v-4H6v4z" fill="#8ccbe8" stroke="#5a9ec0" strokeWidth=".6" />
    </>
  ),
  video: (
    <>
      <path d="M1 1h14v14H1z" fill="#223" />
      <path d="M4 2h8v5H4zM4 9h8v5H4z" fill="#4a9cb8" />
      <path d="M2 2v12M13.500 2v12" stroke="#fff" strokeDasharray="2 1.500" />
    </>
  ),
  picture: (
    <>
      <path d="M.5 2.500h15v11H.5z" fill="#fff" stroke="#8898a8" />
      <path d="M2 4h12v8H2z" fill="#9cd0e4" />
      <path d="M2 9c4-2 7 1 12-1v4H2z" fill="#2c8878" />
    </>
  ),
  document: (
    <>
      <path d="M2.500.5h8l3 3v12h-11z" fill="#fff" stroke="#8898a8" />
      <path d="M4 4h5M4 7h4M4 10h8M4 13h8M9 6.500h3" stroke="#5a7a98" />
    </>
  ),
  music: (
    <>
      <ellipse cx="5" cy="12" rx="4" ry="3.500" fill="#3a9cd4" />
      <path d="M8 12V1c1 4 6 3 4 8" stroke="#3a9cd4" strokeWidth="2" />
    </>
  ),
  computer: (
    <>
      <path d="M0 5h3v9H0z" fill="#c4c8cc" stroke="#888" strokeWidth=".5" />
      <path d="M4 1h12v10H4z" fill="#c8ccd8" />
      <path d="M5 2h10v8H5z" fill="#1a28a8" />
      <path d="M10 2h5v6z" fill="#8a9cf0" />
      <path d="M7 13h7" stroke="#a0a4a8" strokeWidth="2" />
    </>
  ),
  network: (
    <>
      <circle cx="5.500" cy="5.500" r="5" fill="#3a9cc8" />
      <path d="M2 4c3-3 5 0 3 2S4 9 3 9z" fill="#6cc04a" />
      <path d="M6 5h10v8H6z" fill="#c8ccd8" />
      <path d="M7 6h8v6H7z" fill="#1a28a8" />
      <path d="M8 15h6" stroke="#909498" strokeWidth="2" />
    </>
  ),
};

const files = [
  ["bin", "2019/3/26 13:15", "文件夹", ""],
  ["conf", "2019/3/26 13:15", "文件夹", ""],
  ["lib", "2019/3/26 13:40", "文件夹", ""],
  ["logs", "2019/4/10 15:34", "文件夹", ""],
  ["temp", "2019/3/26 13:15", "文件夹", ""],
  ["webapps", "2019/3/26 13:15", "文件夹", ""],
  ["work", "2019/3/26 13:15", "文件夹", ""],
  ["BUILDING.txt", "2019/3/14 11:25", "文本文档", "20 KB"],
  ["CONTRIBUTING.md", "2019/3/14 11:25", "MD 文件", "7 KB"],
  ["LICENSE", "2019/3/14 11:25", "文件", "57 KB"],
  ["NOTICE", "2019/3/14 11:25", "文件", "2 KB"],
  ["README.md", "2019/3/14 11:25", "MD 文件", "4 KB"],
  ["RELEASE-NOTES", "2019/3/14 11:25", "文件", "8 KB"],
  ["RUNNING.txt", "2019/3/14 11:25", "文本文档", "17 KB"],
];

const FileIcon = ({ type }: { type: string }) =>
  type === "文件夹" ? (
    <SmallFolder />
  ) : (
    <Svg w={16} h={17}>
      <path d="M2.500 1.500h8l3 3v12h-11z" fill="#fbfbfb" stroke="#999" />
      <path d="M10.500 1.500v3h3" stroke="#999" />
      {type === "文本文档" && (
        <>
          <path d="M2 1h9" stroke="#777" strokeDasharray="1 1" strokeWidth="2" />
          <path d="M4 6.500h8M4 8.500h8M4 10.500h8M4 12.500h8M4 14.500h8" stroke="#9cb8cc" />
        </>
      )}
    </Svg>
  );

const columns = [
  { name: "名称", width: "w-[271px]", pad: "pl-[17px]" },
  { name: "修改日期", width: "w-[120px]", pad: "pl-[6px]" },
  { name: "类型", width: "w-[120px]", pad: "pl-[6px]" },
  { name: "大小", width: "w-[80px]", pad: "pl-[6px]" },
  { name: "", width: "w-[93px]", pad: "" },
];

const FileTable = () => (
  <table className="w-full table-fixed border-collapse text-left">
    <thead>
      <tr>
        {columns.map((column, i) => (
          <th
            key={column.name}
            className={clsx(
              "h-[22px] border-b-2 border-r-2 border-t border-b-[#606060] border-r-[#606060] border-t-white bg-[#d4d0c8] pb-0 pt-[2px] font-normal",
              column.width,
              column.pad
            )}
          >
            <span className="flex items-center leading-4">
              <Guest text={column.name} />
              {i === 0 && <Svg w={8} h={4} className="ml-[6px]"><path d="M0 4h8L4 0z" fill="#888" /></Svg>}
            </span>
          </th>
        ))}
      </tr>
    </thead>
    <tbody>
      <tr className="h-[6px]"><td colSpan={5} className="p-0" /></tr>
      {files.map(([name, date, type, size]) => (
        <tr key={name} className="h-[22px]">
          <td className="py-0 pl-[18px]">
            <span className="flex items-center gap-1">
              <FileIcon type={type} />
              {name}
            </span>
          </td>
          <td className="py-0 pl-[6px]">{date}</td>
          <td className="py-0 pl-[6px]"><Guest text={type} /></td>
          <td className="py-0 pr-2 text-right">{size}</td>
          <td />
        </tr>
      ))}
    </tbody>
  </table>
);

const commands = [
  { name: "组织", drop: true },
  { name: "包含到库中", drop: true },
  { name: "共享", drop: true },
  { name: "新建文件夹", drop: false },
];

const ExplorerWindow = () => (
  <div
    className={clsx(
      "absolute left-[56px] top-[125px] flex h-[599px] w-[851px] flex-col p-[2px] text-[10px] text-black",
      raised
    )}
  >
    <div className="flex h-[18px] shrink-0 items-center bg-linear-to-r from-[#0a246a] to-[#a6caf0] px-[2px] text-[12px] font-bold text-white">
      <SmallFolder />
      <span className="pl-[2px]">apache-tomcat-8.5.39</span>
      <div className="ml-auto">
        <WindowButtons />
      </div>
    </div>
    <div className="mt-[2px] flex h-[35px] shrink-0 items-center border border-b-[#808080] border-l-white border-r-[#808080] border-t-white pl-1">
      <Round fill="#1c6c94" ring="#24406e" back />
      <span className="w-[2px]" />
      <Round fill="#c4c4c0" ring="#8c8c8c" />
      <Svg w={8} h={6} className="mx-[3px]"><path d="M0 0h8L4 5z" fill="#eee" stroke="#888" /></Svg>
      <div className={clsx("flex h-[21px] w-[520px] items-center", sunken)}>
        <SmallFolder />
        <Svg w={6} h={4} className="ml-2 mr-[6px]"><path d="M0 0h6L3 4z" fill="#000" /></Svg>
        apache-tomcat-8.5.39-windows-x64
        <Svg w={6} h={4} className="mx-[6px]"><path d="M0 0h6L3 4z" fill="#000" /></Svg>
        apache-tomcat-8.5.39
        <Svg w={6} h={4} className="mx-[6px]"><path d="M0 0h6L3 4z" fill="#000" /></Svg>
        <Caret className="ml-auto mr-[10px] text-black" />
        <button type="button" aria-label="刷新" className="flex h-[20px] w-[21px] items-center justify-center border border-[#2a8a2a] bg-linear-to-b from-[#7ad06a] to-[#2aa42a]">
          <SwapArrows color="#e8ffe0" />
        </button>
      </div>
      <label className={clsx("ml-[5px] flex h-[21px] w-[222px] items-center bg-white pl-[10px]", sunken)}>
        <span className="text-[12px]">搜索</span>
        <input
          aria-label="搜索"
          placeholder="apache-tomcat-8.5.39"
          className="w-[180px] bg-transparent pl-[6px] outline-none placeholder:text-black"
        />
      </label>
      <button type="button" aria-label="开始搜索" className="flex h-[20px] w-[21px] items-center justify-center border border-[#b8c8e0] bg-linear-to-b from-[#1c4ca0] to-[#4ca4dc]">
        <Loupe color="#e8f4ff" />
      </button>
    </div>
    <div className="flex h-[31px] shrink-0 items-center gap-[21px] pl-[13px]">
      {commands.map((command) => (
        <button key={command.name} type="button" className="flex items-center gap-[10px] text-[12px]">
          {command.name}
          {command.drop && <Svg w={8} h={4}><path d="M0 0h8L4 4z" fill="#000" /></Svg>}
        </button>
      ))}
      <div className="ml-auto flex items-center pr-4">
        <Svg w={16} h={12}>
          <path d="M.5 1h3v2h-3zM.5 5h3v2h-3zM.5 9h3v2h-3z" stroke="#8090a0" />
          <path d="M6 2h4M11 2h5M6 6h4M11 6h5M6 10h4M11 10h5" stroke="#708090" />
        </Svg>
        <Caret className="ml-3 mr-[15px] text-black" />
        <Svg w={17} h={14}>
          <path d="M.5.5h16v13H.5z" fill="#fff" stroke="#5a8aa8" />
          <path d="M10 3h6v10h-6z" fill="#8ccbe0" />
          <path d="M1 2h15" stroke="#8ab0c8" />
        </Svg>
        <Svg w={16} className="ml-3">
          <circle cx="8" cy="8" r="7" fill="#2c4ca8" stroke="#8a98c0" strokeWidth="1.500" />
          <path d="M6 6.500c0-3 4-3 4-.5 0 2-2 1.500-2 3M8 11v1.500" stroke="#fff" strokeWidth="1.500" />
        </Svg>
      </div>
    </div>
    <div className="flex flex-1 bg-white">
      <nav className="w-[157px] shrink-0 pt-[10px]">
        <ul>
          {places.map((place, i) => (
            <li
              key={i}
              className={clsx(
                "flex h-[18px] items-center gap-1 text-[12px]",
                i === 0 && "bg-[#d4d0c8]",
                place?.child ? "pl-[30px]" : "pl-5"
              )}
            >
              {place && (
                <>
                  <Svg w={16}>{placeIcons[place.icon]}</Svg>
                  {place.name}
                </>
              )}
            </li>
          ))}
        </ul>
      </nav>
      <div className="w-[3px] shrink-0 bg-[#d4d0c8]" />
      <div className="flex-1">
        <FileTable />
      </div>
    </div>
    <div className="flex h-[54px] shrink-0 gap-[25px] overflow-hidden border-t-[5px] border-[#d4d0c8] bg-white pl-5">
      <BigFolder w={34} h={42} />
      <span className="h-6 leading-6">
        <Guest text="14 个对象" />
      </span>
    </div>
  </div>
);

const LanguageBar = () => (
  <div className="absolute bottom-0 right-0 flex h-[23px] w-[103px] items-center border-l-2 border-white bg-[#d4d0c8] text-[11px] text-black">
    <span className="w-[26px] text-center">CH</span>
    <div className="h-5 w-px bg-[#999]" />
    <Svg w={17} h={13} className="mx-[5px]">
      <path d="M.5 5.500h16v7H.5z" fill="#eee" stroke="#777" />
      <path d="M2 7.500h13M2 9.500h13" stroke="#888" strokeDasharray="1.500 1" />
      <path d="M4 5c0-5 6-1 11-4" stroke="#888" />
    </Svg>
    <div className="h-5 w-px bg-[#999]" />
    <Svg w={16} className="mx-[5px]">
      <circle cx="8" cy="8" r="7.500" fill="#12127c" />
      <path d="M6 6.500c0-3 4-3 4-.5 0 2-2 1.500-2 3M8 11v1.500" stroke="#fff" strokeWidth="1.500" />
    </Svg>
    <div className="h-5 w-px bg-[#999]" />
    <Svg w={6} h={12} className="ml-[7px]"><path d="M0 1h6" stroke="#000" strokeWidth="2" /><path d="M0 8h6l-3 4z" fill="#000" /></Svg>
  </div>
);

const GuestDesktop = () => (
  <div className="relative h-[725px] overflow-hidden bg-[#3d6f9f] text-[10px] text-white">
    {desktopIcons.map((item) => (
      <div key={item.top} className={clsx("absolute left-0 w-[76px]", item.top)}>
        <div className={clsx("flex h-[46px] items-start", item.inset)}>{item.icon}</div>
        <div className="-mx-3 whitespace-nowrap text-center leading-[18px]">
          <Guest text={item.label} />
        </div>
      </div>
    ))}
    <div className="absolute left-[391px] top-[8px] flex w-[76px] flex-col items-center">
      <ZipFolder />
      <span className="pt-1">apache-to...</span>
    </div>
    <div className="absolute bottom-3 right-[5px] flex flex-col items-end whitespace-nowrap leading-[14px]">
      <span className="text-[12px] font-bold">Windows Server 2008 R2 Standard</span>
      <span><Guest text="内部版本 7601" /></span>
    </div>
    <span className="absolute bottom-0 right-[103px] leading-[14px]">Winc</span>
    <IeWindow />
    <ExplorerWindow />
    <LanguageBar />
    <Svg w={15} h={22} className="absolute left-[271px] top-[262px]">
      <path d="M1 1v16l4-4 3 7 3-1-3-7h6z" fill="#fff" stroke="#000" />
    </Svg>
  </div>
);

const ServerIcon = () => (
  <Svg w={30} h={32}>
    <path d="M3 1h10v24H3z" fill="#8c9498" />
    <path d="M13 0h5v22h-5z" fill="#5c6468" />
    <path d="M4 4h8M4 7h8M4 10h8" stroke="#d4dade" strokeWidth="1.500" />
    <path d="M8 17h18l3 13-15 1-6-3z" fill="#7c858a" stroke="#4c5458" />
    <path d="M14 17c0-4 8-4 8 0M8 22h20" stroke="#ccd2d6" strokeWidth="1.500" />
  </Svg>
);

const GuestTaskbar = () => (
  <div className="flex h-[43px] items-center border-t border-white bg-[#d4d0c8] pl-px text-[10px] text-black">
    <button type="button" className={clsx("flex h-[38px] w-[48px] items-center gap-[1px] pl-[1px]", raised)}>
      <Svg w={16} h={15}>
        <path d="M2 2q3-2 5 0L6 7Q4 5 1 7z" fill="#e0562c" />
        <path d="M8 2q3 2 6 0l-1 5q-3 2-6 0z" fill="#8cc040" />
        <path d="M1 8q3-2 5 0l-1 5q-2-2-5 0z" fill="#3c7cd0" />
        <path d="M7 8q3 2 6 0l-1 5q-3 2-6 0z" fill="#f4c030" />
      </Svg>
      <span className="text-[12px]">开始</span>
    </button>
    <button type="button" aria-label="服务器管理器" className={clsx("ml-2 flex h-[38px] w-[49px] items-center justify-center", raised)}>
      <ServerIcon />
    </button>
    <button type="button" aria-label="PowerShell" className="flex w-[51px] justify-center">
      <Svg w={28} h={24}>
        <path d="M5 1h22l-5 22H1z" fill="#3c88c4" stroke="#a8cce8" />
        <path d="M10 6l7 6-9 6M15 18h6" stroke="#fff" strokeWidth="2.200" />
      </Svg>
    </button>
    <button type="button" aria-label="资源管理器" className="flex h-[38px] w-[48px] items-center justify-center border border-b-white border-l-[#404040] border-r-white border-t-[#404040] bg-white">
      <Svg w={34} h={32}>
        <path d="M1 6l8-3h22l2 4v22H1z" fill="#eedc84" stroke="#c8b050" />
        <path d="M1 11h32" stroke="#fbf4c0" strokeWidth="3" />
        <path d="M6 4h6M20 4h8" stroke="#5a9c5a" strokeWidth="2" />
        <path d="M14 5h4" stroke="#c04030" strokeWidth="2" />
        <path d="M5 31V22q12-6 24 0v9h-5v-6H11v6z" fill="#a8dcf2" stroke="#5aa8d0" />
      </Svg>
    </button>
    <button type="button" aria-label="Internet Explorer" className={clsx("ml-[2px] flex h-[38px] w-[49px] items-center justify-center", raised)}>
      <IeLogo size={30} />
    </button>
    <div className={clsx("ml-auto mr-[3px] flex h-[38px] w-[206px] items-center gap-2 pl-[6px]", sunken)}>
      <Svg w={16}>
        <path d="M0 1h15v13H0z" fill="#55585c" />
        <text x="1" y="9" fontSize="7" fill="#fff">vm</text>
        <path d="M11 5l5 10H6z" fill="#f4d040" stroke="#a08010" strokeWidth=".5" />
        <path d="M11 9v3M11 13v1" stroke="#000" />
      </Svg>
      <Svg w={16}>
        <path d="M3 0v4M6 0v4M1 4h7v5H1zM4 9v6" fill="#888" stroke="#666" />
        <circle cx="11" cy="11" r="5" fill="#2ca02c" />
        <path d="M8 11l2 2 4-4" stroke="#fff" strokeWidth="1.500" />
      </Svg>
      <Svg w={16}><path d="M2 1v15M2 2h6l1 2h6l-2 6H9L8 8H2z" fill="#fff" stroke="#666" /></Svg>
      <Svg w={16}>
        <path d="M4 4h11v8H4z" fill="#eee" stroke="#555" strokeWidth="1.500" />
        <path d="M6 15h8M1 1v4h4V1M3 5v8" stroke="#555" />
      </Svg>
      <Svg w={17} h={16}>
        <path d="M1 6h3l5-5v14l-5-5H1z" fill="#fff" stroke="#777" />
        <circle cx="12" cy="11" r="4.500" fill="#d02c3c" />
        <path d="M10 9l4 4M14 9l-4 4" stroke="#fff" strokeWidth="1.500" />
      </Svg>
      <div className="flex w-[60px] flex-col text-center leading-4">
        <span>23:05</span>
        <span>2020/12/2</span>
      </div>
      <Svg w={16} h={12} className="-ml-[5px]">
        <path d="M0 0h16v12H0z" fill="#2a66b8" />
        <path d="M0 0h16L3 8z" fill="#5a96dc" />
        <path d="M1 11h14" stroke="#c8d8ec" />
      </Svg>
    </div>
  </div>
);

const VmWindow = () => (
  <section className="absolute left-[134px] top-[96px] w-[1027px] border border-[#6a6a6a] bg-white shadow-[0_2px_16px_rgba(0,0,0,0.5)]">
    <div className="flex h-[36px] items-center pl-2">
      <VmwareLogo size={20} />
      <h1 className="pl-[5px] text-[16px] text-black">jsp+oracle - VMware Workstation</h1>
      <div className="ml-auto flex gap-[46px] pr-[24px]">
        <button type="button" aria-label="最小化"><Svg w={12}><path d="M0 5.500h12" stroke="#000" /></Svg></button>
        <button type="button" aria-label="最大化"><Svg w={12}><path d="M.5.5h11v11H.5z" stroke="#000" /></Svg></button>
        <button type="button" aria-label="关闭"><Svg w={12}><path d="M0 0l12 12M12 0L0 12" stroke="#000" /></Svg></button>
      </div>
    </div>
    <VmToolbar />
    <MachineTabs />
    <div className={mono}>
      <GuestDesktop />
      <GuestTaskbar />
    </div>
    <VmStatus />
  </section>
);

/* ---------- QR card ---------- */

const qrRows = [
  "1111111000000111011011011",
  "1000001010110001010111010",
  "1011101001100110001001111",
  "1011101011011010011101001",
  "1011101001111001110110100",
  "1000001011001110011011110",
  "1111111010101010101010101",
  "0000000001110010110011001",
  "0000110110001101011101011",
  "1000111011100001101010011",
  "1101111001010111000110110",
  "0101110110101110011111000",
  "1010111101001001100001010",
  "0101101010111011000000111",
  "0000010010001110000000011",
  "1001001001111000000000001",
  "0110110110110000000000110",
  "1011001101100100000000011",
  "0101100110001100000000100",
  "1110110011111000000000111",
  "1010011100101100000000001",
  "0111011001110010000000110",
  "1110110110011010000000011",
  "0011001001100001111110110",
  "0100101100110101111110011",
  "1001011011001110011001101",
  "0010110100110011101110010",
  "0000000001001110011011001",
  "1101101101110010110011110",
  "0000000011010011001110100",
  "1111111010110110011110111",
  "1000001011011001011010011",
  "1011101001110110110001110",
  "1011101010011110010110101",
  "1011101011110011101001110",
  "1000001001111010011110001",
  "1111111011110110100101101",
];

const QrCard = () => (
  <aside className="absolute right-0 top-5 h-[222px] w-[127px] overflow-hidden bg-white">
    <Svg w={120} h={179} box="0 0 124 185" className="ml-[7px] mt-[3px]">
      <path
        d={qrRows
          .flatMap((row, y) => [...row].map((cell, x) => (cell === "1" ? `M${x * 5} ${y * 5}h5v5h-5z` : "")))
          .join("")}
        fill="#000"
        shapeRendering="crispEdges"
      />
      <rect x="68" y="68" width="48" height="49" rx="5" fill="#fff" />
      <rect x="70" y="71" width="44" height="43" rx="4" fill="#1c2c30" />
      <path d="M94 71h16q4 0 4 4v26l-16-6z" fill="#5cb48c" />
      <path d="M104 74l3 10-2 8-4-4zM94 96l10-8 6 4v8z" fill="#14201e" />
      <path d="M87 76q6-2 7 5l-4 6-4-3zM75 88h6l1 16-6 4zM84 94q2-7 7-2l2 8-7-1z" fill="#e4ece8" />
      <path d="M97 111q2-8 14-11M103 112q2-5 10-8M74 78l8 2M77 111h12M74 84h9" stroke="#e4ece8" strokeWidth="2" />
      <circle cx="88" cy="94" r="2" fill="#1c2c30" />
    </Svg>
    <p className="ml-[41px] mt-[24px] whitespace-nowrap text-[7px] leading-[10px] text-[#777]">
      扫一扫上面的二维码图案，加我微信
    </p>
  </aside>
);

/* ---------- host taskbar ---------- */

const taskIcons = [
  {
    name: "文件资源管理器",
    slot: "ml-[6px] w-[50px]",
    icon: (
      <Svg w={28} h={26}>
        <path d="M0 1h12l2 3h14v20H0z" fill="#f4cc5c" />
        <path d="M0 1h12l1 3H0z" fill="#c89420" />
        <path d="M5 26V14h18v12h-5v-7h-8v7z" fill="#4890b8" />
      </Svg>
    ),
  },
  {
    name: "Burp",
    slot: "ml-3 w-[51px]",
    icon: (
      <Svg w={24} h={24}>
        <path d="M0 3l11-2v22L0 21z" fill="#3c3c40" />
        <path d="M11 1l13 2v18l-13 2z" fill="#d85c40" />
        <path d="M18 5l-3 6h5l-4 7" stroke="#fff" strokeWidth="2" />
      </Svg>
    ),
  },
  {
    name: "VMware Workstation",
    slot: "ml-[6px] w-[60px] bg-[#edf5f7]",
    icon: <VmwareLogo size={30} />,
  },
  {
    name: "P",
    slot: "ml-[6px] w-[51px]",
    icon: (
      <span className="flex h-[30px] w-[30px] items-center justify-center rounded bg-[#2496d8] text-[24px] font-semibold leading-none text-white">
        P
      </span>
    ),
  },
  {
    name: "WPS",
    slot: "ml-[11px] w-[51px]",
    icon: (
      <Svg w={30}>
        <rect width="30" height="30" rx="5" fill="#42a4f4" />
        <path d="M6 10h4M20 10h4M8 10l3 10 4-6 4 6 3-10" stroke="#fff" strokeWidth="2" />
      </Svg>
    ),
  },
];

const EdgeIcon = () => (
  <Svg w={30}>
    <circle cx="15" cy="15" r="15" fill="#1c7cc8" />
    <path d="M1 12C3 2 13-2 22 2c8 4 10 12 5 17-4 2-9 1-9-1 3-3 1-8-4-8C8 10 3 10 1 12z" fill="#48c890" />
    <path d="M1 12c8-6 17-2 18 4l-1 1c-1-4-7-5-9 0-2 6 4 11 12 10-8 6-22 0-20-15z" fill="#2090d8" />
    <path d="M18 18c-2 4 4 6 9 2l1-1c-2 5-8 7-12 4-4-2-4-8 0-10 3-1 5 2 2 5z" fill="#dff2f6" />
  </Svg>
);

const HostTaskbar = () => (
  <footer className="flex h-[50px] shrink-0 items-center overflow-hidden bg-[#d5e6ea] text-black">
    <input
      aria-label="搜索"
      placeholder="在这里输入你要搜索的内容"
      className="h-full w-[393px] shrink-0 border-b border-t border-[#ccc] bg-white pl-[14px] text-[19px] outline-none placeholder:text-[#444]"
    />
    <Tool label="Cortana" className="w-[62px]">
      <Svg w={20}><circle cx="10" cy="10" r="8.500" stroke="#111" strokeWidth="2.500" /></Svg>
    </Tool>
    <Tool label="任务视图" className="w-[58px]">
      <Svg w={21} h={20}>
        <path d="M1 0v3h12V0M1 20v-3h12v3M2 6h10v8H2zM18 0v5M18 11v9M16 7h4v3h-4z" stroke="#111" strokeWidth="1.500" />
      </Svg>
    </Tool>
    <Tool label="Edge" className="w-[66px] pl-[3px]"><EdgeIcon /></Tool>
    {taskIcons.map((task) => (
      <button
        key={task.name}
        type="button"
        aria-label={task.name}
        className={clsx(
          "flex h-full shrink-0 items-center justify-center border-b-[3px] border-[#1c74b4] pt-[2px]",
          task.slot
        )}
      >
        {task.icon}
      </button>
    ))}
    <div className="ml-auto flex w-[309px] shrink-0 items-center">
      <Svg w={17} h={10}><path d="M1 9l7.500-8L16 9" stroke="#222" strokeWidth="1.500" /></Svg>
      <Svg w={20} h={20} className="ml-[10px]">
        <path d="M4 0h12v8H4z" fill="#b8c4c8" stroke="#667" />
        <path d="M0 6h20v9q0 5-5 5H5q-5 0-5-5z" fill="#2c94cc" />
        <path d="M10 8v10M6 11v3l4 2 4-2v-3" stroke="#0c4c7c" />
        <path d="M7 3h2M12 3h2" stroke="#333" strokeWidth="2" />
      </Svg>
      <Svg w={14} h={20} className="ml-[13px]">
        <rect x="3" width="8" height="14" rx="1" fill="#111" />
        <path d="M.7 9v4q0 4 6.300 4t6.300-4V9M7 17v2M3 19h8" stroke="#111" strokeWidth="1.400" />
      </Svg>
      <Svg w={17} h={18} className="ml-[16px]">
        <path d="M1 17C1 8 8 1 16 1M5 17C5 10 10 5 16 5M9 17c0-4 3-8 7-8M12 17c0-2 2-4 4-4" stroke="#444" />
        <circle cx="14.500" cy="15.500" r="1.500" fill="#222" />
      </Svg>
      <Svg w={22} h={18} className="ml-[10px]">
        <path d="M1 6h3l4-4v14l-4-4H1zM11 6c2 2 2 4 0 6M14 4c3 3 3 7 0 10M17 1c5 5 5 11 0 16" stroke="#222" strokeWidth="1.300" />
      </Svg>
      <Svg w={18} h={20} className="ml-[9px]">
        <ellipse cx="9" cy="11" rx="7" ry="8" fill="#111" />
        <ellipse cx="9" cy="5" rx="5" ry="5" fill="#111" />
        <ellipse cx="9" cy="14" rx="4.500" ry="5" fill="#fff" />
        <ellipse cx="7.500" cy="4" rx="1" ry="1.500" fill="#fff" />
        <ellipse cx="10.500" cy="4" rx="1" ry="1.500" fill="#fff" />
        <path d="M6 7q3 2 6 0" stroke="#f0b020" strokeWidth="1.500" />
        <path d="M2 9q7 4 14 0l-1 3q-6 3-12 0z" fill="#d82c2c" />
        <path d="M3 19h5M10 19h5" stroke="#f0a020" strokeWidth="2" />
      </Svg>
      <span className="ml-[10px] text-[20px] font-medium leading-6">中</span>
      <span className="ml-[17px] flex h-5 w-5 items-center justify-center border border-black bg-white text-[15px] leading-none">
        拼
      </span>
      <div className="ml-auto flex w-[54px] flex-col overflow-hidden whitespace-nowrap text-[16px] leading-[23px]">
        <span className="pl-[17px]">23:05</span>
        <span>2020/12/2</span>
      </div>
    </div>
  </footer>
);

export default function App() {
  return (
    <div className={clsx("relative flex h-screen min-h-[1060px] w-full flex-col overflow-hidden bg-[#c0c0ca]", ui)}>
      <AppTabs />
      <Ribbon />
      <main className="flex flex-1">
        <div className="mx-[380px] flex-1 border-r-[3px] border-[#b8b8c0] bg-white" />
      </main>
      <StatusBar />
      <HostTaskbar />
      <div className="absolute left-[2px] top-5 font-['Liberation_Serif','Noto_Sans_CJK_SC',serif] text-[31px] leading-[34px] text-[#c01420]">
        制作
      </div>
      <VmWindow />
      <QrCard />
    </div>
  );
}
